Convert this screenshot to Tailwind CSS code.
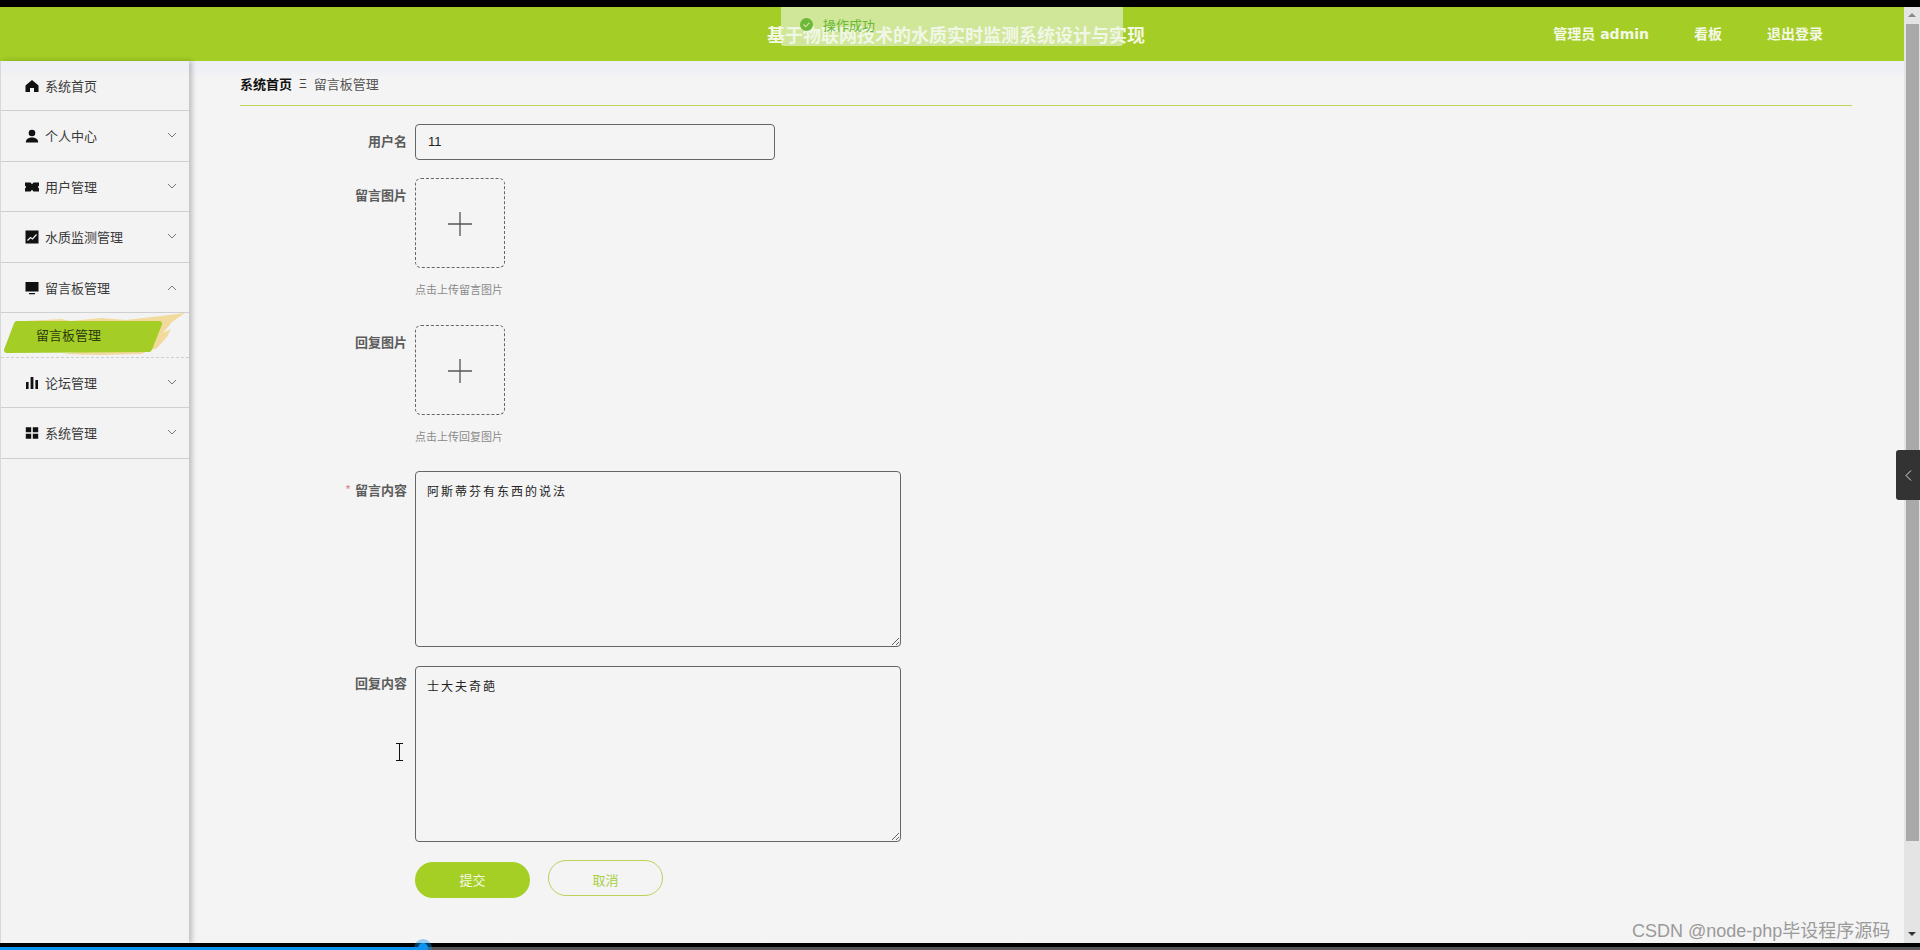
<!DOCTYPE html>
<html lang="zh">
<head>
<meta charset="utf-8">
<title>留言板管理</title>
<script src="https://cdn.jsdelivr.net/npm/@tailwindcss/browser@4"></script>
</head>
<body class="bg-black">
<div class="relative w-[1920px] h-[950px] overflow-hidden flex flex-col bg-black font-['Noto_Sans_CJK_SC','Noto_Sans',sans-serif] text-[13px] text-[#333]">
  <div class="h-[7px] shrink-0 bg-black"></div>

  <div class="flex flex-1 min-h-0">
    <div class="w-[1904px] flex flex-col">
      <header class="h-[54px] shrink-0 flex items-center bg-[#a4cd25] text-white">
        <h1 class="ml-[767px] text-[18px] font-bold leading-none whitespace-nowrap text-[#f4f8e6]">基于物联网技术的水质实时监测系统设计与实现</h1>
        <nav class="ml-auto mr-[81px] flex items-center gap-[45px] text-[14px] font-bold text-[#f4f8e6] font-['DejaVu_Sans','Noto_Sans_CJK_SC',sans-serif]">
          <span class="whitespace-nowrap">管理员 admin</span>
          <span class="whitespace-nowrap">看板</span>
          <span class="whitespace-nowrap">退出登录</span>
        </nav>
      </header>

      <div class="flex flex-1 min-h-0">
        <aside class="relative z-10 w-[189px] shrink-0 border-l border-[#d8d8d8] bg-linear-to-b from-[#eef0f5] from-[8px] to-[#f3f3f3] to-[16px] shadow-[3px_0_5px_rgba(0,0,0,0.22)] text-[#3a3a3a]">
          <div class="h-[50px] flex items-center pl-[24px] border-b border-[#cfcfcf]">
            <svg class="w-[14px] h-[14px] mr-[6px] text-[#111]" viewBox="0 0 14 14" fill="currentColor"><path d="M7 1 13.5 6.5V13H9V9H5V13H.5V6.5Z"/></svg>
            <span>系统首页</span>
          </div>
          <div class="h-[51px] flex items-center pl-[24px] pr-[12px] border-b border-[#cfcfcf]">
            <svg class="w-[14px] h-[14px] mr-[6px] text-[#111]" viewBox="0 0 14 14" fill="currentColor"><circle cx="7" cy="4" r="3.3"/><path d="M.8 13.5C.8 9.8 3.6 8.4 7 8.4s6.2 1.4 6.2 5.1Z"/></svg>
            <span>个人中心</span>
            <svg class="ml-auto mb-[2px] w-[10px] h-[6px] text-[#777]" viewBox="0 0 10 6" fill="none" stroke="currentColor"><path d="M1 1 5 5 9 1"/></svg>
          </div>
          <div class="h-[50px] flex items-center pl-[24px] pr-[12px] border-b border-[#cfcfcf]">
            <svg class="w-[14px] h-[14px] mr-[6px] text-[#111]" viewBox="0 0 14 14" fill="currentColor"><path d="M0 2.500H5.500L7 4.200 8.500 2.500H14V5.500L12.800 7 14 8.500V11.500H8.500L7 9.800 5.500 11.500H0V8.500L1.200 7 0 5.500Z"/></svg>
            <span>用户管理</span>
            <svg class="ml-auto mb-[2px] w-[10px] h-[6px] text-[#777]" viewBox="0 0 10 6" fill="none" stroke="currentColor"><path d="M1 1 5 5 9 1"/></svg>
          </div>
          <div class="h-[51px] flex items-center pl-[24px] pr-[12px] border-b border-[#cfcfcf]">
            <svg class="w-[14px] h-[14px] mr-[6px]" viewBox="0 0 14 14"><rect x=".5" y=".5" width="13" height="13" fill="#111"/><path d="M2.500 10.500 5.500 7.500 7.500 9 11.500 4.500" fill="none" stroke="#f3f3f3" stroke-width="1.200"/></svg>
            <span>水质监测管理</span>
            <svg class="ml-auto mb-[2px] w-[10px] h-[6px] text-[#777]" viewBox="0 0 10 6" fill="none" stroke="currentColor"><path d="M1 1 5 5 9 1"/></svg>
          </div>
          <div class="h-[50px] flex items-center pl-[24px] pr-[12px] border-b border-[#cfcfcf]">
            <svg class="w-[14px] h-[14px] mr-[6px] text-[#111]" viewBox="0 0 14 14" fill="currentColor"><path d="M.5 1H13.500V10.500H.5ZM4 12H10V13.300H4Z"/></svg>
            <span>留言板管理</span>
            <svg class="ml-auto w-[10px] h-[6px] text-[#777]" viewBox="0 0 10 6" fill="none" stroke="currentColor"><path d="M1 5 5 1 9 5"/></svg>
          </div>
          <div class="relative h-[45px] flex items-center pl-[35px] border-b border-dashed border-[#cfcfcf] text-[#2c3a10]">
            <svg class="absolute left-0 top-0 w-[188px] h-[44px]" viewBox="0 0 188 44">
              <path d="M24 8 60 6 70 8 100 5 125 7 160 3 184 0 171 9 162 20 170 16 166 24 156 35 140 41 100 42 60 41 96 37 10 37Z" fill="#f2d99c"/>
              <path d="M16 11 158 11 148 36 6 37Z" fill="#a4cd25" stroke="#a4cd25" stroke-width="6" stroke-linejoin="round"/>
            </svg>
            <span class="relative">留言板管理</span>
          </div>
          <div class="h-[50px] flex items-center pl-[24px] pr-[12px] border-b border-[#cfcfcf]">
            <svg class="w-[14px] h-[14px] mr-[6px] text-[#111]" viewBox="0 0 14 14" fill="currentColor"><path d="M1 6H3.600V13H1ZM5.600 1H8.400V13H5.600ZM10.400 4H13V13H10.400Z"/></svg>
            <span>论坛管理</span>
            <svg class="ml-auto mb-[2px] w-[10px] h-[6px] text-[#777]" viewBox="0 0 10 6" fill="none" stroke="currentColor"><path d="M1 1 5 5 9 1"/></svg>
          </div>
          <div class="h-[51px] flex items-center pl-[24px] pr-[12px] border-b border-[#cfcfcf]">
            <svg class="w-[14px] h-[14px] mr-[6px] text-[#111]" viewBox="0 0 14 14" fill="currentColor"><path d="M.8 1.200H6.200V6.200H.8ZM7.800 1.200H13.200V6.200H7.800ZM.8 7.800H6.200V12.800H.8ZM7.800 7.800H13.200V12.800H7.800Z"/></svg>
            <span>系统管理</span>
            <svg class="ml-auto mb-[2px] w-[10px] h-[6px] text-[#777]" viewBox="0 0 10 6" fill="none" stroke="currentColor"><path d="M1 1 5 5 9 1"/></svg>
          </div>
        </aside>

        <main class="flex-1 pl-[51px] pr-[52px] bg-linear-to-b from-[#eef0f5] from-[8px] to-[#f4f4f4] to-[16px]">
          <div class="h-[45px] flex items-center pt-[2px] border-b border-[#c3d35c] text-[13px]">
            <span class="font-bold text-[#111]">系统首页</span>
            <span class="ml-[7px] mr-[7px] text-[12px] text-[#444] leading-none font-['Liberation_Sans',sans-serif]">Ξ</span>
            <span class="text-[#555]">留言板管理</span>
          </div>

          <form class="pt-[18px]">
            <div class="flex">
              <label class="w-[167px] mr-[8px] text-right leading-[34px] font-bold text-[#5c5c5c]">用户名</label>
              <input class="w-[360px] h-[36px] px-[12px] pb-[2px] border border-[#666] rounded-[4px] bg-transparent text-[13px] text-[#222] outline-none font-['Liberation_Sans',sans-serif]" value="11">
            </div>

            <div class="flex mt-[18px]">
              <label class="w-[167px] mr-[8px] text-right leading-[34px] font-bold text-[#5c5c5c]">留言图片</label>
              <div>
                <div class="w-[90px] h-[90px] flex items-center justify-center pt-[2px] border border-dashed border-[#666] rounded-[6px]">
                  <svg class="w-[24px] h-[24px] text-[#555]" viewBox="0 0 24 24" fill="none" stroke="currentColor" stroke-width="1.300"><path d="M12 0V24M0 12H24"/></svg>
                </div>
                <p class="mt-[13px] mb-[1px] leading-[16px] text-[11px] text-[#8a8a8a]">点击上传留言图片</p>
              </div>
            </div>

            <div class="flex mt-[27px]">
              <label class="w-[167px] mr-[8px] text-right leading-[34px] font-bold text-[#5c5c5c]">回复图片</label>
              <div>
                <div class="w-[90px] h-[90px] flex items-center justify-center pt-[2px] border border-dashed border-[#666] rounded-[6px]">
                  <svg class="w-[24px] h-[24px] text-[#555]" viewBox="0 0 24 24" fill="none" stroke="currentColor" stroke-width="1.300"><path d="M12 0V24M0 12H24"/></svg>
                </div>
                <p class="mt-[13px] mb-[1px] leading-[16px] text-[11px] text-[#8a8a8a]">点击上传回复图片</p>
              </div>
            </div>

            <div class="flex mt-[26px]">
              <label class="w-[167px] mr-[8px] text-right leading-[38px] font-bold text-[#5c5c5c]"><span class="font-normal text-[#e08a95] mr-[4px]">*</span>留言内容</label>
              <textarea class="block w-[486px] h-[176px] px-[11px] py-[10px] border border-[#666] rounded-[4px] bg-transparent text-[12px] leading-[18px] tracking-[2px] text-[#222] outline-none">阿斯蒂芬有东西的说法</textarea>
            </div>

            <div class="flex mt-[19px]">
              <label class="w-[167px] mr-[8px] text-right leading-[34px] font-bold text-[#5c5c5c]">回复内容</label>
              <textarea class="block w-[486px] h-[176px] px-[11px] py-[10px] border border-[#666] rounded-[4px] bg-transparent text-[12px] leading-[18px] tracking-[2px] text-[#222] outline-none">士大夫奇葩</textarea>
            </div>

            <div class="flex items-start gap-[18px] ml-[175px] mt-[20px]">
              <button type="button" class="w-[115px] h-[36px] rounded-full bg-[#a6cf26] text-[#f4f8e6] text-[13px]">提交</button>
              <button type="button" class="w-[115px] h-[36px] -mt-[2px] pt-[4px] rounded-full border border-[#b9d25a] bg-transparent text-[#a9cf45] text-[13px]">取消</button>
            </div>
          </form>
        </main>
      </div>
    </div>

    <div class="w-[16px] shrink-0 flex flex-col items-center bg-[#e4e4e4]">
      <svg class="w-[16px] h-[17px] shrink-0" viewBox="0 0 16 17"><path d="M4 10 8 6 12 10Z" fill="#8a8a8a"/></svg>
      <div class="w-[13px] h-[817px] shrink-0 bg-[#a9a9a9]"></div>
      <svg class="mt-auto mb-[4px] w-[16px] h-[10px] shrink-0" viewBox="0 0 16 10"><path d="M4 3H12L8 7Z" fill="#333"/></svg>
    </div>
  </div>

  <div class="h-[7px] shrink-0 flex flex-col">
    <div class="h-[4px] bg-black"></div>
    <div class="h-[3px] flex bg-[#555]"><div class="w-[423px] bg-[#0a94ef]"></div></div>
  </div>

  <!-- toast over the title -->
  <div class="absolute left-[781px] top-[7px] w-[342px] h-[39px] z-20 flex items-start pl-[19px] pt-[10px] rounded-b-[3px] bg-[#eef7e6]/60">
    <svg class="w-[13px] h-[13px] mt-[1px] shrink-0" viewBox="0 0 13 13"><circle cx="6.500" cy="6.500" r="6.500" fill="#6cb838"/><path d="M3.500 6.500 5.700 8.600 9.500 4.700" fill="none" stroke="#d0e2a0" stroke-width="1.200"/></svg>
    <span class="ml-[10px] text-[13px] leading-[15px] text-[#6cb838]">操作成功</span>
  </div>

  <!-- drawer tab -->
  <div class="absolute left-[1896px] top-[450px] w-[24px] h-[50px] z-20 flex items-center justify-center rounded-l-[3px] bg-[#333]">
    <svg class="w-[7px] h-[11px] ml-[1px] text-[#ddd]" viewBox="0 0 7 11" fill="none" stroke="currentColor"><path d="M6 .5 1 5.500 6 10.500"/></svg>
  </div>

  <!-- text cursor -->
  <svg class="absolute left-[395px] top-[743px] w-[9px] h-[18px] z-20 text-[#111]" viewBox="0 0 9 18" fill="none" stroke="currentColor"><path d="M1 .5H8M4.500 .5V17.500M1 17.500H8"/></svg>

  <!-- watermark -->
  <div class="absolute left-[1632px] top-[918px] z-20 whitespace-nowrap text-[18px] leading-[26px] text-[#9a9a9a] font-['Liberation_Sans','Noto_Sans_CJK_SC',sans-serif]">CSDN @node-php毕设程序源码</div>

  <!-- video progress knob -->
  <div class="absolute left-[414px] top-[939px] w-[18px] h-[18px] z-20 flex items-center justify-center rounded-full bg-[#0a94ef]/40">
    <div class="w-[10px] h-[10px] rounded-full bg-[#0a94ef]"></div>
  </div>
</div>
</body>
</html>
